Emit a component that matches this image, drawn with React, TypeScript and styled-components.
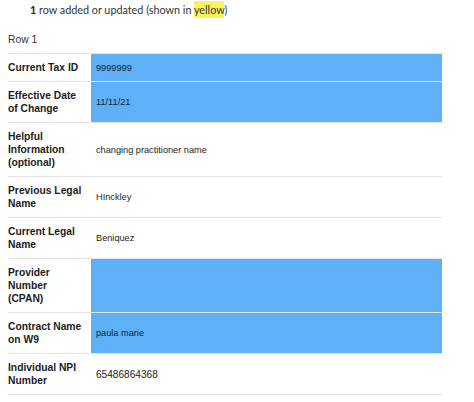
import React from "react";
import styled, { createGlobalStyle } from "styled-components";

const Global = createGlobalStyle`
  html, body { margin: 0; padding: 0; background: #ffffff; }
  body { font-family: "Liberation Sans", Arial, sans-serif; }
`;

const Page = styled.div`
  width: 474px;
  padding: 0 32px 0 8px;
  box-sizing: border-box;
`;

const Summary = styled.div`
  height: 20px;
  line-height: 20px;
  padding-left: 22px;
  font-family: Lato, "Open Sans", sans-serif;
  font-size: 10.8px;
  color: #333333;
`;

const Count = styled.b`
  font-weight: 700;
  color: #222222;
`;

const Mark = styled.span`
  background: #fbf35a;
  padding: 2px 0;
`;

const Caption = styled.div`
  margin-top: 7px;
  height: 26px;
  line-height: 26px;
  font-size: 10.3px;
  color: #333333;
`;

const Table = styled.div`
  border-top: 1px solid #e4e4e4;
  display: flex;
  flex-direction: column;
`;

const Row = styled.div`
  display: flex;
  border-bottom: 1px solid #e4e4e4;
`;

const Label = styled.div`
  width: 83px;
  flex: none;
  box-sizing: border-box;
  padding: 7px 6px 7px 0;
  font-size: 10.3px;
  line-height: 13px;
  font-weight: 700;
  color: #1c1c1c;
`;

const Value = styled.div<{ $changed?: boolean; $size?: number }>`
  flex: 1;
  display: flex;
  align-items: center;
  padding: 0 5px;
  font-size: ${(p) => p.$size ?? 9.2}px;
  color: ${(p) => (p.$changed ? "#10233a" : "#222222")};
  background: ${(p) => (p.$changed ? "#5eb0f7" : "transparent")};
`;

type Field = { label: string; value: string; changed?: boolean; size?: number };

const fields: Field[] = [
  { label: "Current Tax ID", value: "9999999", changed: true },
  { label: "Effective Date of Change", value: "11/11/21", changed: true },
  { label: "Helpful Information (optional)", value: "changing practitioner name" },
  { label: "Previous Legal Name", value: "HInckley" },
  { label: "Current Legal Name", value: "Beniquez" },
  { label: "Provider Number (CPAN)", value: "", changed: true },
  { label: "Contract Name on W9", value: "paula marie", changed: true },
  { label: "Individual NPI Number", value: "65486864368", size: 10.1 },
];

export default function App() {
  return (
    <Page>
      <Global />
      <Summary>
        <Count>1</Count> row added or updated (shown in <Mark>yellow</Mark>)
      </Summary>
      <Caption>Row 1</Caption>
      <Table>
        {fields.map((f) => (
          <Row key={f.label}>
            <Label>{f.label}</Label>
            <Value $changed={f.changed} $size={f.size}>
              {f.value}
            </Value>
          </Row>
        ))}
      </Table>
    </Page>
  );
}
